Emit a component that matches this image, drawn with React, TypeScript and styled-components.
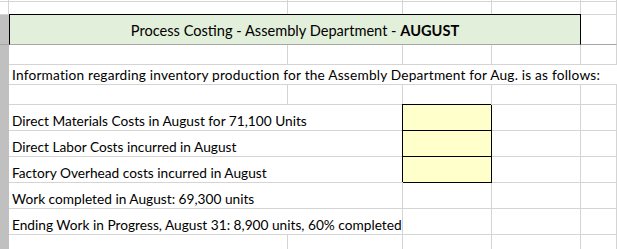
import React from 'react';
import styled, { createGlobalStyle } from 'styled-components';

const GRID = '#d4d4d4';
const FREEZE = '#a6a6a6';

const GlobalStyle = createGlobalStyle`
  html, body {
    margin: 0;
    padding: 0;
    background: #ffffff;
    overflow: hidden;
  }
`;

const Sheet = styled.div`
  display: grid;
  grid-template-columns: 9px 279px 115px 89px 89px 1fr;
  grid-template-rows: 2px 13px 30px 20px 20px 20px repeat(5, 26px) 20px;
  width: 617px;
  height: 249px;
  overflow: hidden;
  font-family: Lato, 'Liberation Sans', sans-serif;
  font-size: 13.7px;
  color: #000000;
`;

const RowHead = styled.div<{ $plain?: boolean; $freeze?: boolean }>`
  background: ${(p) => (p.$plain ? '#ffffff' : '#c0c0c0')};
  border-right: ${(p) => (p.$plain ? `1px solid ${GRID}` : 'none')};
  border-bottom: ${(p) =>
    p.$plain ? `1px solid ${GRID}` : p.$freeze ? `1px solid ${FREEZE}` : 'none'};
`;

const Cell = styled.div<{ $freeze?: boolean }>`
  border-right: 1px solid ${GRID};
  border-bottom: 1px solid ${p => (p.$freeze ? FREEZE : GRID)};
`;

const InputCell = styled.div`
  background: #ffffcc;
  border-right: 1px solid #000000;
  border-bottom: 1px solid #000000;
  box-shadow: -1px -1px 0 #000000;
`;

const TitleCell = styled.div`
  grid-column: 2 / 6;
  display: flex;
  align-items: center;
  justify-content: center;
  padding-top: 1px;
  font-size: 14.6px;
  background: #e2efda;
  border-left: 1px solid #000000;
  border-right: 1px solid #000000;
  border-bottom: 1px solid ${FREEZE};
  box-shadow: 0 -1px 0 #000000;
  white-space: nowrap;

  b {
    font-weight: 700;
  }
`;

const TextCell = styled.div<{ $wide?: boolean }>`
  grid-column: ${(p) => (p.$wide ? '2 / 7' : '2 / 4')};
  display: flex;
  align-items: flex-end;
  padding: 0 0 0 3px;
  line-height: 18px;
  letter-spacing: ${(p) => (p.$wide ? '0.2px' : 'normal')};
  white-space: nowrap;
  border-right: ${(p) => (p.$wide ? 'none' : `1px solid ${GRID}`)};
  border-bottom: 1px solid ${GRID};
`;

const BlankRow: React.FC<{ top?: boolean }> = ({ top }) => (
  <>
    <RowHead $plain={top} />
    <Cell />
    <Cell />
    <Cell />
    <Cell />
    <Cell />
  </>
);

const DataRow: React.FC<{ label: string; input?: boolean }> = ({ label, input }) => (
  <>
    <RowHead />
    <TextCell>{label}</TextCell>
    {input ? <InputCell /> : <Cell />}
    <Cell />
    <Cell />
  </>
);

const lines = [
  { label: 'Direct Materials Costs in August for 71,100 Units', input: true },
  { label: 'Direct Labor Costs incurred in August', input: true },
  { label: 'Factory Overhead costs incurred in August', input: true },
  { label: 'Work completed in August: 69,300 units' },
  { label: 'Ending Work in Progress, August 31: 8,900 units, 60% completed' },
];

export default function App() {
  return (
    <>
      <GlobalStyle />
      <Sheet>
        <BlankRow top />
        <BlankRow top />

        <RowHead $freeze />
        <TitleCell>
          Process Costing - Assembly Department -&nbsp;<b>AUGUST</b>
        </TitleCell>
        <Cell $freeze />

        <BlankRow />

        <RowHead />
        <TextCell $wide>
          Information regarding inventory production for the Assembly Department for Aug. is as follows:
        </TextCell>

        <BlankRow />

        {lines.map((l) => (
          <DataRow key={l.label} label={l.label} input={l.input} />
        ))}

        <BlankRow />
      </Sheet>
    </>
  );
}
